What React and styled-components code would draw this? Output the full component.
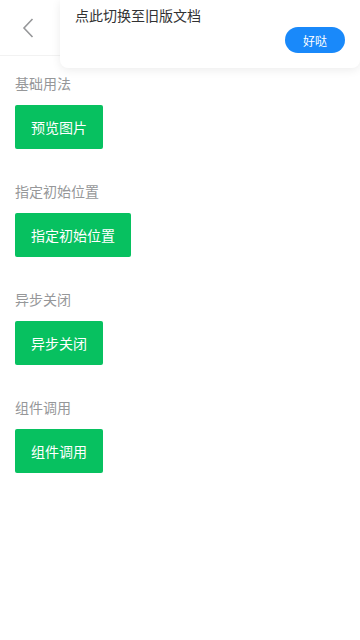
import styled, { createGlobalStyle } from 'styled-components';

const GlobalStyle = createGlobalStyle`
  * { box-sizing: border-box; }
  body {
    margin: 0;
    background: #fff;
    font-family: "Noto Sans CJK SC", "Noto Sans", sans-serif;
  }
`;

const Page = styled.div`
  position: relative;
  width: 360px;
  min-height: 640px;
  background: #fff;
`;

const Header = styled.div`
  height: 56px;
  display: flex;
  align-items: center;
  padding-left: 18px;
  border-bottom: 1px solid #f2f2f2;
`;

const Back = styled.div`
  width: 20px;
  height: 24px;
  display: flex;
  align-items: center;
  justify-content: center;
`;

const Tip = styled.div`
  position: absolute;
  top: 0;
  left: 60px;
  right: 0;
  height: 68px;
  background: #fff;
  border-radius: 0 0 8px 8px;
  box-shadow: 0 2px 10px rgba(0, 0, 0, 0.08);
  padding: 5px 15px 0 15px;
  display: flex;
  flex-direction: column;
`;

const TipText = styled.div`
  font-size: 14px;
  line-height: 20px;
  color: #323233;
`;

const OkButton = styled.button`
  align-self: flex-end;
  margin-top: 2px;
  width: 60px;
  height: 26px;
  border: none;
  border-radius: 13px;
  background: #1989fa;
  color: #fff;
  font-family: inherit;
  font-size: 12px;
  padding: 0;
`;

const Block = styled.div`
  padding: 19px 15px 15px;
`;

const Title = styled.h2`
  margin: 0 0 14px;
  font-size: 14px;
  font-weight: 400;
  line-height: 16px;
  color: #969799;
`;

const Button = styled.button`
  height: 44px;
  padding: 0 16px;
  border: none;
  border-radius: 2px;
  background: #07c160;
  color: #fff;
  font-family: inherit;
  font-size: 14px;
  line-height: 20px;
`;

const demos = ['预览图片', '指定初始位置', '异步关闭', '组件调用'];
const titles = ['基础用法', '指定初始位置', '异步关闭', '组件调用'];

const App = () => {
  return (
    <Page>
      <GlobalStyle />
      <Header>
        <Back>
          <svg width="12" height="20" viewBox="0 0 12 20">
            <path d="M10.5 1 L2 10 L10.5 19" fill="none" stroke="#969799" strokeWidth="1.6" />
          </svg>
        </Back>
      </Header>
      {demos.map((label, i) => (
        <Block key={label + i}>
          <Title>{titles[i]}</Title>
          <Button>{label}</Button>
        </Block>
      ))}
      <Tip>
        <TipText>点此切换至旧版文档</TipText>
        <OkButton>好哒</OkButton>
      </Tip>
    </Page>
  );
};

export default App;
